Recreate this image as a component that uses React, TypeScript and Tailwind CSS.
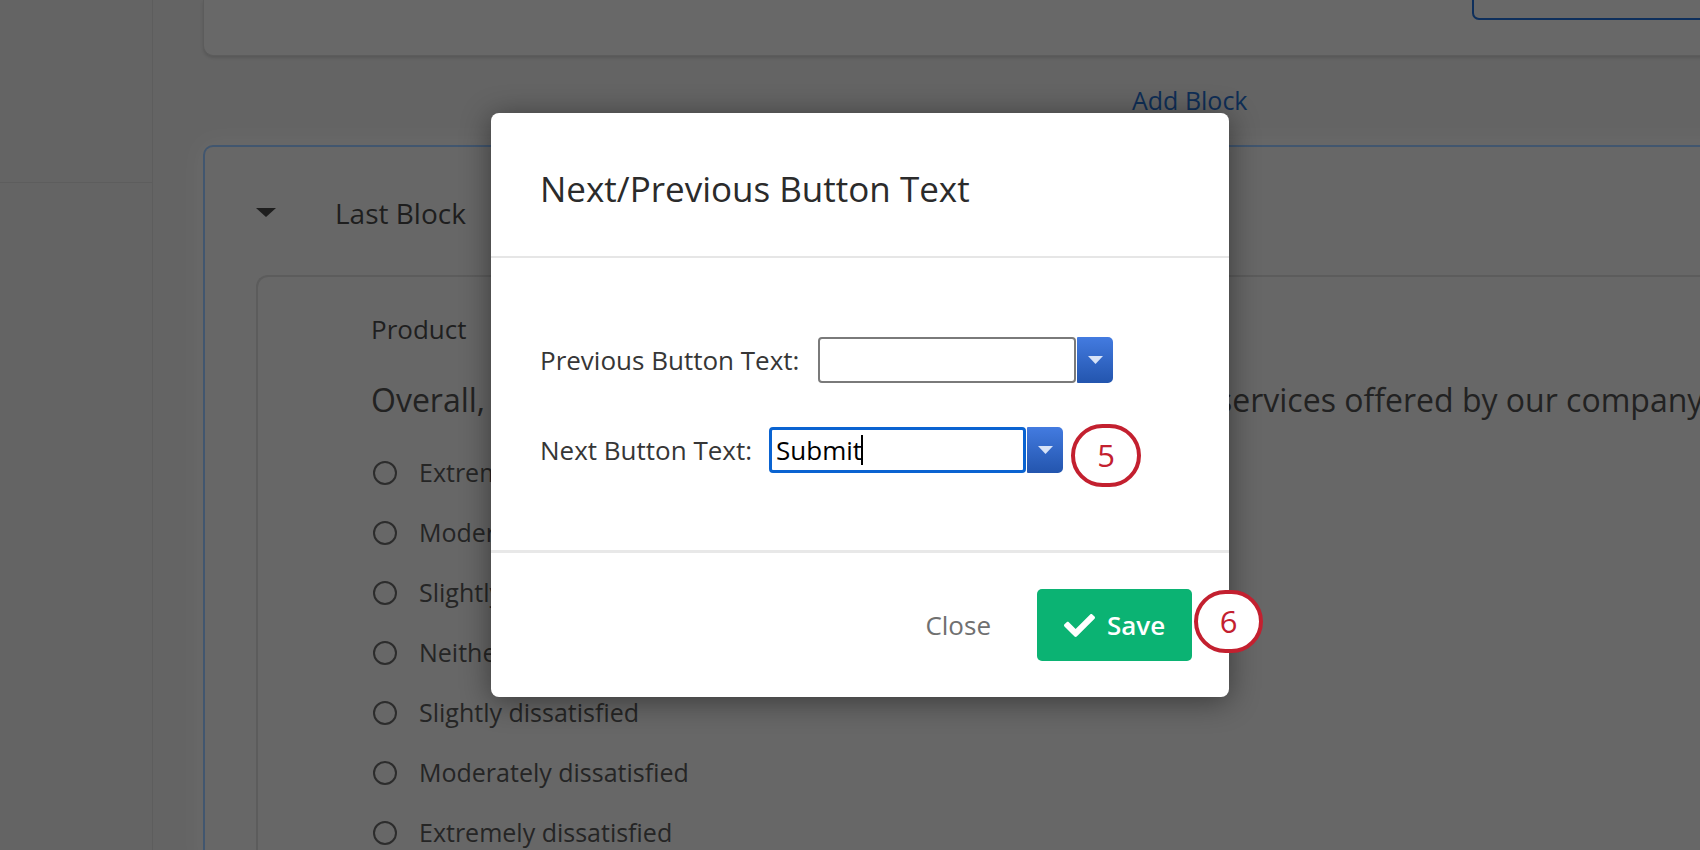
import React from "react";
import { FaCheck } from "react-icons/fa";

function DropBtn() {
  return (
    <div className="ml-[1px] w-[36px] h-[46px] rounded-r-[5px] rounded-l-[1px] bg-gradient-to-b from-[#437be0] to-[#2355ae] flex items-center justify-center">
      <svg width="15" height="8" viewBox="0 0 15 8">
        <polygon points="0,0 15,0 7.5,8" fill="#d8e3f7" />
      </svg>
    </div>
  );
}

const options = [
  "Extremely satisfied",
  "Moderately satisfied",
  "Slightly satisfied",
  "Neither satisfied nor dissatisfied",
  "Slightly dissatisfied",
  "Moderately dissatisfied",
  "Extremely dissatisfied",
];

export default function App() {
  return (
    <div className="relative w-[1700px] h-[850px] overflow-hidden bg-[#646464] flex font-['Open_Sans',sans-serif]">
      {/* sidebar */}
      <div className="w-[153px] shrink-0 border-r border-[#5d5d5d]">
        <div className="h-[183px] border-b border-[#5d5d5d]" />
      </div>

      {/* main */}
      <div className="flex-1 min-w-0 pl-[50px] flex flex-col">
        <div className="h-[56px] w-[1540px] shrink-0 bg-[#686868] border-l border-b border-[#5c5c5c] rounded-bl-[10px] shadow-[0_2px_3px_rgba(0,0,0,0.12)]">
          <div className="ml-[1268px] h-[20px] w-[260px] border-2 border-t-0 border-[#0e2f5c] rounded-b-[7px]" />
        </div>

        <div className="h-[89px] shrink-0 flex items-center pl-[929px] text-[25px] text-[#0f2e56] whitespace-nowrap">
          Add Block
        </div>

        <div className="w-[1540px] flex-1 flex flex-col bg-[#676767] border-2 border-b-0 border-[#41566f] rounded-t-[10px] shadow-[0_0_26px_6px_rgba(255,255,255,0.04)]">
          <div className="h-[128px] shrink-0 flex items-center pl-[51px] pt-[3px]">
            <svg width="20" height="9" viewBox="0 0 20 9">
              <polygon points="0,0 20,0 10,9" fill="#1e1e1e" />
            </svg>
            <span className="ml-[59px] text-[28px] text-[#1e1e1e]">Last Block</span>
          </div>
          <div className="ml-[51px] flex-1 border-2 border-b-0 border-r-0 border-[#5c5c5c] rounded-tl-[12px] pt-[34px] pl-[113px]">
            <div className="text-[26px] leading-[36px] text-[#1f1f1f]">Product</div>
            <div className="mt-[31px] text-[32px] leading-[44px] text-[#222222] whitespace-nowrap">
              <span className="inline-block w-[846px]">Overall, how satisfied are you with the products and</span>
              <span>services offered by our company?</span>
            </div>
            <div className="mt-[21px] flex flex-col">
              {options.map((o) => (
                <div key={o} className="h-[60px] flex items-center">
                  <div className="ml-[2px] w-[24px] h-[24px] rounded-full border-2 border-[#2c2c2c]" />
                  <span className="ml-[22px] text-[25px] text-[#252525] whitespace-nowrap">{o}</span>
                </div>
              ))}
            </div>
          </div>
        </div>
      </div>

      {/* modal */}
      <div className="absolute left-[491px] top-[113px] w-[738px] h-[584px] bg-white rounded-[8px] shadow-[0_4px_30px_rgba(0,0,0,0.45)] flex flex-col">
        <div className="h-[145px] shrink-0 border-b-2 border-[#e6e6e6] flex items-center pl-[49px] pt-[9px] text-[35px] text-[#2b2b2b] whitespace-nowrap">
          Next/Previous Button Text
        </div>
        <div className="h-[292px] shrink-0 pt-[79px] pl-[49px] flex flex-col">
          <div className="h-[46px] flex items-center">
            <span className="text-[26px] text-[#363636] whitespace-nowrap">Previous Button Text:</span>
            <div className="ml-[19px] w-[258px] h-[46px] border-2 border-[#7a7a7a] rounded-[4px]" />
            <DropBtn />
          </div>
          <div className="mt-[44px] h-[46px] flex items-center">
            <span className="text-[26px] text-[#363636] whitespace-nowrap">Next Button Text:</span>
            <div className="ml-[17px] w-[257px] h-[46px] border-[3px] border-[#0a63d1] rounded-[4px] pl-[4px] flex items-center text-[26px] text-black">
              <span>Submit</span>
              <span className="-ml-[1px] w-[2px] h-[30px] bg-black" />
            </div>
            <DropBtn />
          </div>
        </div>
        <div className="flex-1 border-t-[3px] border-[#e8e8e8] flex items-center justify-end pr-[37px] gap-[46px]">
          <span className="text-[26px] text-[#707070]">Close</span>
          <div className="w-[155px] h-[72px] rounded-[5px] bg-[#0bb373] flex items-center justify-center gap-[12px] text-white text-[26px] font-semibold">
            <FaCheck className="w-[31px] h-[31px]" />
            <span>Save</span>
          </div>
        </div>
      </div>

      {/* annotations */}
      <div className="absolute left-[1071px] top-[424px] w-[70px] h-[63px] rounded-full border-[4px] border-[#c3202f] bg-white flex items-center justify-center text-[31px] text-[#c3202f]">
        5
      </div>
      <div className="absolute left-[1194px] top-[590px] w-[69px] h-[63px] rounded-full border-[4px] border-[#c3202f] bg-white flex items-center justify-center text-[31px] text-[#c3202f]">
        6
      </div>
    </div>
  );
}
